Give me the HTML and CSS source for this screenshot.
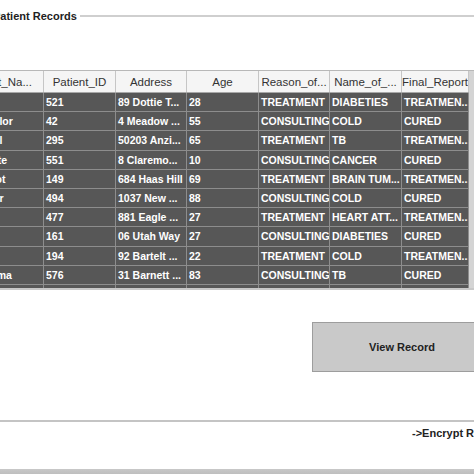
FILE: index.html
```html
<!DOCTYPE html>
<html lang="en">
<head>
  <meta charset="UTF-8">
  <title>Patient Records</title>
  <link rel="stylesheet" href="styles.css">
</head>
<body>
  <div class="records-box">
    <div class="box-title">
      <span>Patient Records</span>
      <div class="title-line"></div>
    </div>

    <div class="grid-wrap">
      <table class="grid">
        <colgroup>
          <col class="c-name">
          <col class="c-id">
          <col class="c-addr">
          <col class="c-age">
          <col class="c-reason">
          <col class="c-ill">
          <col class="c-final">
        </colgroup>
        <thead>
          <tr>
            <th>Patient_Na...</th>
            <th>Patient_ID</th>
            <th>Address</th>
            <th>Age</th>
            <th>Reason_of...</th>
            <th>Name_of_...</th>
            <th>Final_Report</th>
          </tr>
        </thead>
        <tbody>
          <tr><td>Ravi</td><td>521</td><td>89 Dottie T...</td><td>28</td><td>TREATMENT</td><td>DIABETIES</td><td>TREATMEN...</td></tr>
          <tr><td>Sam Taylor</td><td>42</td><td>4 Meadow ...</td><td>55</td><td>CONSULTING</td><td>COLD</td><td>CURED</td></tr>
          <tr><td>Ana Dhal</td><td>295</td><td>50203 Anzi...</td><td>65</td><td>TREATMENT</td><td>TB</td><td>TREATMEN...</td></tr>
          <tr><td>Jon White</td><td>551</td><td>8 Claremo...</td><td>10</td><td>CONSULTING</td><td>CANCER</td><td>CURED</td></tr>
          <tr><td>Ben Elliot</td><td>149</td><td>684 Haas Hill</td><td>69</td><td>TREATMENT</td><td>BRAIN TUM...</td><td>TREATMEN...</td></tr>
          <tr><td>Liz Baker</td><td>494</td><td>1037 New ...</td><td>88</td><td>CONSULTING</td><td>COLD</td><td>CURED</td></tr>
          <tr><td>Raj Soni</td><td>477</td><td>881 Eagle ...</td><td>27</td><td>TREATMENT</td><td>HEART ATT...</td><td>TREATMEN...</td></tr>
          <tr><td>Tom</td><td>161</td><td>06 Utah Way</td><td>27</td><td>CONSULTING</td><td>DIABETIES</td><td>CURED</td></tr>
          <tr><td>Mia</td><td>194</td><td>92 Bartelt ...</td><td>22</td><td>TREATMENT</td><td>COLD</td><td>TREATMEN...</td></tr>
          <tr><td>Ann Verma</td><td>576</td><td>31 Barnett ...</td><td>83</td><td>CONSULTING</td><td>TB</td><td>CURED</td></tr>
          <tr><td>Kim Ross</td><td>588</td><td>166 Hill St...</td><td>41</td><td>TREATMENT</td><td>CANCER</td><td>TREATMEN...</td></tr>
        </tbody>
      </table>
    </div>

    <div class="actions">
      <button class="view-btn">View Record</button>
    </div>
  </div>

  <div class="encrypt-row">
    <span class="encrypt-link">-&gt;Encrypt Records</span>
  </div>

  <div class="status-strip"></div>
</body>
</html>
```

FILE: styles.css
```css
body {
  margin: 0;
  width: 474px;
  height: 474px;
  overflow: hidden;
  background: #fff;
  font-family: "Liberation Sans", Arial, sans-serif;
  color: #222;
}

.records-box {
  height: 422px;
  border-bottom: 2px solid #c4c4c4;
  box-sizing: border-box;
}

/* group box caption with its rule */
.box-title {
  display: flex;
  align-items: center;
  gap: 3px;
  margin-left: -7px;
  padding-top: 10px;
  font-size: 11px;
  font-weight: bold;
  white-space: nowrap;
}

.title-line {
  flex: 1;
  height: 2px;
  background: #cfcfcf;
}

.grid-wrap {
  margin-top: 48px;
  margin-left: -46px;
  width: 520px;
  height: 220px;
  overflow: hidden;
  border-top: 1px solid #b8b8b8;
  border-bottom: 2px solid #c8c8c8;
  background: #d4d4d4;
  box-sizing: border-box;
}

.grid {
  width: 514px;
  border-collapse: collapse;
  table-layout: fixed;
}

.grid th {
  height: 21px;
  padding: 0;
  background: #f5f5f5;
  color: #333;
  font-size: 11.5px;
  font-weight: normal;
  text-align: center;
  white-space: nowrap;
  overflow: hidden;
  border-right: 1px solid #c6c6c6;
  border-bottom: 1px solid #a8a8a8;
}

.grid td {
  height: 18.2px;
  padding: 0 2px;
  background: #575757;
  color: #fff;
  font-size: 10.5px;
  font-weight: bold;
  white-space: nowrap;
  overflow: hidden;
  border: 1px solid #8d8d8d;
}

.c-name { width: 89px; }
.c-id { width: 72px; }
.c-addr { width: 71px; }
.c-age { width: 72px; }
.c-reason { width: 71px; }
.c-ill { width: 72px; }
.c-final { width: 67px; }

.actions {
  padding: 32px 0 0 312px;
}

.view-btn {
  width: 180px;
  height: 50px;
  background: #c9c9c9;
  border: 1px solid #9d9d9d;
  font-family: "Liberation Sans", Arial, sans-serif;
  font-size: 11px;
  font-weight: bold;
  color: #222;
}

.encrypt-row {
  padding: 5px 0 0 412px;
  height: 42px;
  font-size: 11px;
  font-weight: bold;
  white-space: nowrap;
}

.status-strip {
  height: 10px;
  background: linear-gradient(#c8c8c8, #b5b5b5);
}
```
